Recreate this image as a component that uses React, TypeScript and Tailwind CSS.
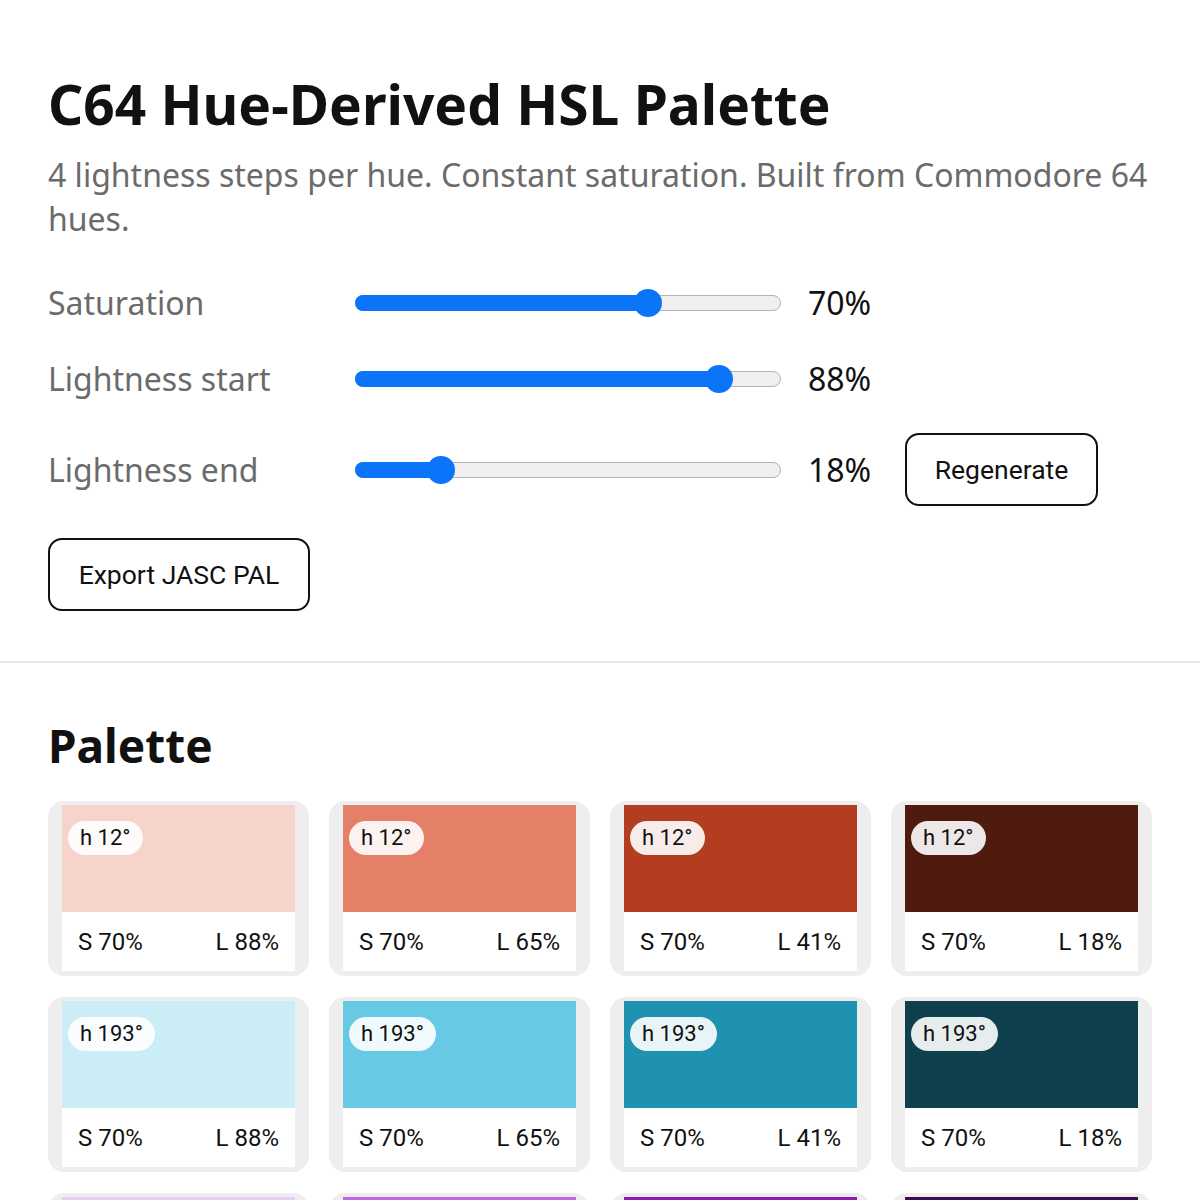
import React from "react";

const hues = [12, 193, 283, 118, 238, 53];
const ls = [88, 65, 41, 18];

function Slider({ value }: { value: number }) {
  const thumb = 28;
  const width = 426;
  const left = (value / 100) * (width - thumb);
  return (
    <div className="relative w-[426px] h-[28px] flex items-center">
      <div className="absolute left-0 right-0 h-[16px] rounded-full bg-[#efefef] border border-[#b3b3b3]" />
      <div
        className="absolute left-0 h-[16px] rounded-full bg-[#0b75fa]"
        style={{ width: left + thumb / 2 }}
      />
      <div
        className="absolute top-0 w-[28px] h-[28px] rounded-full bg-[#0b75fa]"
        style={{ left }}
      />
    </div>
  );
}

function Row({ label, value, extra }: { label: string; value: number; extra?: React.ReactNode }) {
  return (
    <div className="flex items-center">
      <div className="w-[307px] text-[32px] leading-[44px] text-[#6b6b6b]">{label}</div>
      <Slider value={value} />
      <div className="ml-[27px] w-[70px] text-[32px] leading-[44px] text-[#111]">{value}%</div>
      {extra}
    </div>
  );
}

export default function App() {
  return (
    <div className="min-h-[1200px] bg-white text-[#111]" style={{ fontFamily: '"Noto Sans", sans-serif' }}>
      <div className="px-12 pt-[70px] pb-[50px] border-b-2 border-[#e8e8e8]">
        <h1 className="text-[55px] leading-[68px] font-bold text-[#111]">C64 Hue-Derived HSL Palette</h1>
        <p className="mt-[15px] text-[32px] leading-[44px] text-[#6b6b6b]">
          4 lightness steps per hue. Constant saturation. Built from Commodore 64 hues.
        </p>
        <div className="mt-[40px] flex flex-col gap-8">
          <Row label="Saturation" value={70} />
          <Row label="Lightness start" value={88} />
          <Row
            label="Lightness end"
            value={18}
            extra={
              <button
                className="ml-[27px] w-[193px] h-[73px] rounded-[14px] border-2 border-[#111] bg-white text-[26.5px] text-[#111]"
                style={{ fontFamily: "Roboto, sans-serif" }}
              >
                Regenerate
              </button>
            }
          />
          <div>
            <button
              className="w-[262px] h-[73px] rounded-[14px] border-2 border-[#111] bg-white text-[26.5px] text-[#111]"
              style={{ fontFamily: "Roboto, sans-serif" }}
            >
              Export JASC PAL
            </button>
          </div>
        </div>
      </div>
      <div className="px-12 pt-[52px]">
        <h2 className="text-[46px] leading-[60px] font-bold text-[#111]">Palette</h2>
        <div className="mt-[26px] grid grid-cols-4 gap-x-[20px] gap-y-[21px]" style={{ fontFamily: "Roboto, sans-serif" }}>
          {hues.map((h) =>
            ls.map((l) => (
              <div key={`${h}-${l}`} className="rounded-[16px] bg-[#eeeeee] px-[14px] pt-[4px] pb-[5px]">
                <div className="relative h-[107px]" style={{ backgroundColor: `hsl(${h}, 70%, ${l}%)` }}>
                  <span className="absolute left-[6px] top-[16px] h-[34px] px-[12px] rounded-full bg-white/90 text-[22px] leading-[34px] text-[#111]">
                    h {h}°
                  </span>
                </div>
                <div className="h-[59px] bg-white flex items-center justify-between px-[16px] text-[24px] text-[#111]">
                  <span>S 70%</span>
                  <span>L {l}%</span>
                </div>
              </div>
            ))
          )}
        </div>
      </div>
    </div>
  );
}
